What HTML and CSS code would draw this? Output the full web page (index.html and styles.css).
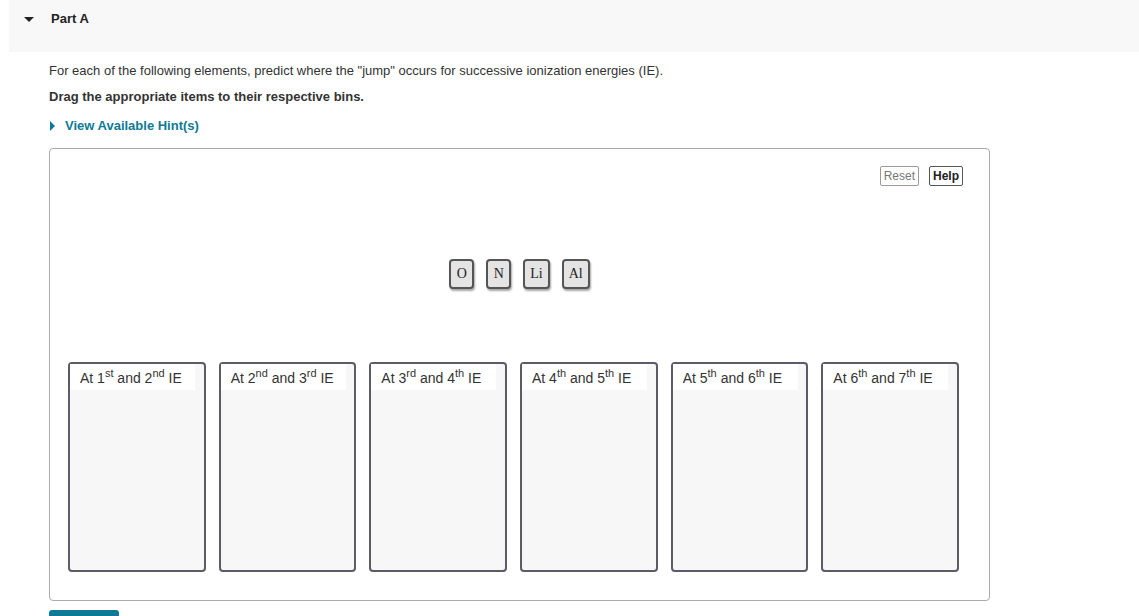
FILE: index.html
```html
<!DOCTYPE html>
<html>
<head>
<meta charset="utf-8">
<link rel="stylesheet" href="styles.css">
</head>
<body>
<div class="part-header">
  <span class="caret"></span>
  <span class="part-title">Part A</span>
</div>
<div class="content">
  <p class="prompt">For each of the following elements, predict where the "jump" occurs for successive ionization energies (IE).</p>
  <p class="instr">Drag the appropriate items to their respective bins.</p>
  <div class="hint"><span class="hint-caret"></span>View Available Hint(s)</div>
  <div class="dnd">
    <div class="toolbar">
      <button class="btn btn-reset">Reset</button>
      <button class="btn btn-help">Help</button>
    </div>
    <div class="tiles">
      <span class="tile">O</span>
      <span class="tile">N</span>
      <span class="tile">Li</span>
      <span class="tile">Al</span>
    </div>
    <div class="bins">
      <div class="bin"><div class="bin-label">At 1<sup>st</sup> and 2<sup>nd</sup> IE</div></div>
      <div class="bin"><div class="bin-label">At 2<sup>nd</sup> and 3<sup>rd</sup> IE</div></div>
      <div class="bin"><div class="bin-label">At 3<sup>rd</sup> and 4<sup>th</sup> IE</div></div>
      <div class="bin"><div class="bin-label">At 4<sup>th</sup> and 5<sup>th</sup> IE</div></div>
      <div class="bin"><div class="bin-label">At 5<sup>th</sup> and 6<sup>th</sup> IE</div></div>
      <div class="bin"><div class="bin-label">At 6<sup>th</sup> and 7<sup>th</sup> IE</div></div>
    </div>
  </div>
  <div class="submit-bar"></div>
</div>
</body>
</html>
```

FILE: styles.css
```css
html, body {
  margin: 0;
  padding: 0;
  background: #fff;
  font-family: "Liberation Sans", Arial, sans-serif;
  color: #333;
  overflow: hidden;
}
.part-header {
  margin-left: 9px;
  height: 52px;
  background: #f8f8f8;
  display: flex;
  align-items: flex-start;
  padding-top: 11px;
  box-sizing: border-box;
}
.caret {
  width: 0;
  height: 0;
  border-left: 5px solid transparent;
  border-right: 5px solid transparent;
  border-top: 5px solid #222;
  margin-left: 15px;
  margin-top: 6px;
}
.part-title {
  margin-left: 17px;
  font-size: 13px;
  font-weight: bold;
  color: #222;
}
.content {
  padding-left: 49px;
}
.prompt {
  margin: 11px 0 0;
  font-size: 13px;
  line-height: 15px;
  color: #333;
}
.instr {
  margin: 11px 0 0;
  font-size: 13px;
  line-height: 15px;
  font-weight: bold;
  color: #333;
}
.hint {
  margin-top: 14px;
  font-size: 13px;
  line-height: 15px;
  font-weight: bold;
  color: #0e7a96;
  display: flex;
  align-items: center;
}
.hint-caret {
  width: 0;
  height: 0;
  border-top: 5px solid transparent;
  border-bottom: 5px solid transparent;
  border-left: 5px solid #0e7a96;
  margin-left: 1px;
  margin-right: 10px;
}
.dnd {
  margin-top: 15px;
  width: 941px;
  height: 453px;
  box-sizing: border-box;
  border: 1px solid #aaa;
  border-radius: 4px;
  padding: 17px 30px 0 18px;
}
.toolbar {
  display: flex;
  justify-content: flex-end;
  gap: 10px;
  margin-right: -4px;
}
.btn {
  font-family: "Liberation Sans", Arial, sans-serif;
  font-size: 12px;
  height: 20px;
  padding: 0 3px;
  background: #fff;
  border: 1px solid #777;
  border-radius: 2px;
  line-height: 18px;
}
.btn-reset {
  color: #777;
  border-color: #999;
}
.btn-help {
  color: #222;
  font-weight: bold;
  border-color: #555;
}
.tiles {
  margin-top: 73px;
  display: flex;
  justify-content: center;
  gap: 12px;
  margin-left: -18px;
  margin-right: -30px;
}
.tile {
  font-family: "Liberation Serif", "Times New Roman", serif;
  font-size: 14px;
  color: #222;
  background: #e4e4e4;
  border: 2px solid #555;
  border-radius: 4px;
  box-shadow: 1px 2px 2px rgba(0,0,0,0.35);
  height: 30px;
  box-sizing: border-box;
  padding: 0 5px;
  min-width: 25px;
  display: flex;
  align-items: center;
  justify-content: center;
}
.bins {
  margin-top: 73px;
  display: grid;
  grid-template-columns: repeat(6, 1fr);
  gap: 13px;
}
.bin {
  height: 210px;
  box-sizing: border-box;
  border: 2px solid #5c5c66;
  border-radius: 4px;
  background: #f7f7f7;
  padding: 0;
}
.bin-label {
  background: #fff;
  width: 125px;
  height: 26px;
  box-sizing: border-box;
  padding: 6px 0 0 10px;
  font-size: 14px;
  color: #333;
  line-height: 17px;
}
.bin-label sup {
  font-size: 11px;
  line-height: 0;
  vertical-align: 6px;
}
.submit-bar {
  margin-top: 9px;
  width: 70px;
  height: 10px;
  background: #0e7a96;
  border-radius: 3px 3px 0 0;
}
```
